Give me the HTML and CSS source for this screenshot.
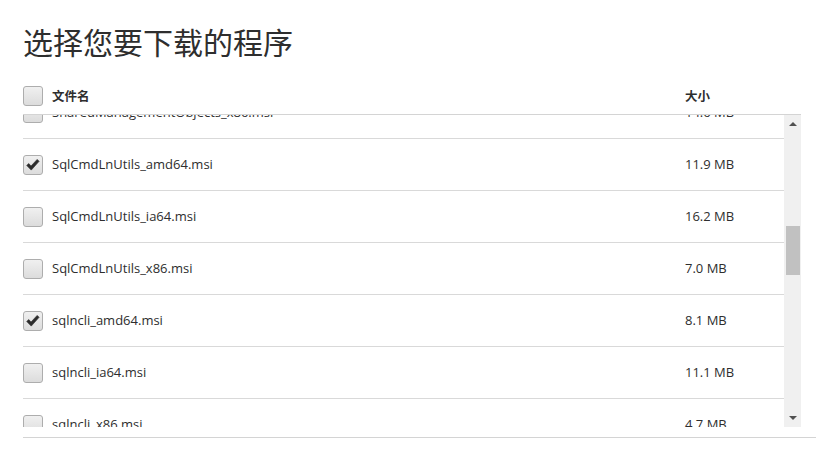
FILE: index.html
```html
<!DOCTYPE html>
<html lang="zh-CN">
<head>
<meta charset="utf-8">
<title>选择您要下载的程序</title>
<link rel="stylesheet" href="styles.css">
</head>
<body>
<div class="page">
  <h1 class="title">选择您要下载的程序</h1>
  <div class="table">
    <div class="thead">
      <span class="cb"></span>
      <span class="col-name th">文件名</span>
      <span class="col-size th">大小</span>
    </div>
    <div class="tbody">
      <div class="viewport">
        <div class="list">
          <div class="row"><span class="cb"></span><span class="col-name">SharedManagementObjects_x86.msi</span><span class="col-size">14.6 MB</span></div>
          <div class="row"><span class="cb checked"><svg viewBox="0 0 20 20" class="tick"><path d="M2.2 10.6 L4.6 8.2 L7.6 11.2 L15.2 3 L17.6 5.4 L7.8 16.4 Z"/></svg></span><span class="col-name">SqlCmdLnUtils_amd64.msi</span><span class="col-size">11.9 MB</span></div>
          <div class="row"><span class="cb"></span><span class="col-name">SqlCmdLnUtils_ia64.msi</span><span class="col-size">16.2 MB</span></div>
          <div class="row"><span class="cb"></span><span class="col-name">SqlCmdLnUtils_x86.msi</span><span class="col-size">7.0 MB</span></div>
          <div class="row"><span class="cb checked"><svg viewBox="0 0 20 20" class="tick"><path d="M2.2 10.6 L4.6 8.2 L7.6 11.2 L15.2 3 L17.6 5.4 L7.8 16.4 Z"/></svg></span><span class="col-name">sqlncli_amd64.msi</span><span class="col-size">8.1 MB</span></div>
          <div class="row"><span class="cb"></span><span class="col-name">sqlncli_ia64.msi</span><span class="col-size">11.1 MB</span></div>
          <div class="row"><span class="cb"></span><span class="col-name">sqlncli_x86.msi</span><span class="col-size">4.7 MB</span></div>
        </div>
      </div>
      <div class="scrollbar">
        <span class="arrow up"></span>
        <div class="track"><div class="thumb"></div></div>
        <span class="arrow down"></span>
      </div>
    </div>
  </div>
  <div class="footer-line"></div>
</div>
</body>
</html>
```
FILE: styles.css
```css
html, body {
  margin: 0;
  background: #fff;
}
body {
  font-family: "Open Sans", "Noto Sans CJK SC", sans-serif;
  font-size: 13px;
  color: #2e2e2e;
}
.page {
  padding: 21px 0 0 23px;
}
.title {
  margin: 0;
  font-family: "Noto Sans CJK SC", sans-serif;
  font-size: 30px;
  line-height: 40px;
  font-weight: 400;
  color: #2e2e2e;
}
.table {
  margin-top: 17px;
  width: 778px;
}
.thead {
  display: flex;
  align-items: center;
  height: 36px;
  border-bottom: 1px solid #d4d4d4;
}
.th {
  font-family: "Noto Sans CJK SC", sans-serif;
  font-weight: 700;
  font-size: 12.5px;
  line-height: 16px;
  padding-bottom: 1px;
}
.cb {
  flex: 0 0 auto;
  box-sizing: border-box;
  width: 20px;
  height: 20px;
  margin-right: 9px;
  border: 1px solid #adadad;
  border-radius: 3px;
  background: linear-gradient(#f0f0f0, #dcdcdc);
  display: flex;
  align-items: center;
  justify-content: center;
}
.tick {
  width: 16px;
  height: 16px;
}
.tick path {
  fill: #2b2b2b;
  stroke: #2b2b2b;
  stroke-width: 0.8;
  stroke-linejoin: round;
}
.col-name {
  flex: 0 0 633px;
  white-space: nowrap;
}
.col-size {
  flex: 1;
  white-space: nowrap;
}
.tbody {
  display: flex;
  height: 312px;
}
.viewport {
  flex: 1;
  overflow: hidden;
}
.list {
  margin-top: -28px;
}
.row {
  display: flex;
  align-items: center;
  height: 51px;
  border-bottom: 1px solid #d9d9d9;
}
.row .col-name, .row .col-size {
  line-height: 18px;
  padding-bottom: 1px;
}
.scrollbar {
  flex: 0 0 17px;
  background: #f0f0f0;
  display: flex;
  flex-direction: column;
  align-items: center;
}
.arrow {
  width: 0;
  height: 0;
  border-left: 4px solid transparent;
  border-right: 4px solid transparent;
}
.arrow.up {
  margin-top: 7px;
  border-bottom: 4px solid #505050;
}
.arrow.down {
  margin-bottom: 7px;
  border-top: 4px solid #505050;
}
.track {
  flex: 1;
  align-self: stretch;
  padding: 0 1px 0 2px;
  padding-top: 100px;
}
.thumb {
  height: 49px;
  background: #c1c1c1;
}
.footer-line {
  margin-top: 10px;
  border-top: 1px solid #d4d4d4;
}
```
